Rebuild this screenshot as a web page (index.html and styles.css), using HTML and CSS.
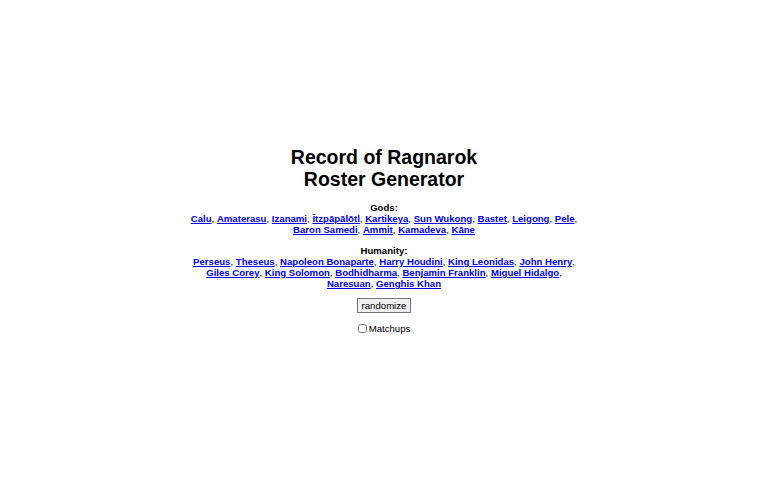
FILE: index.html
```html
<!DOCTYPE html>
<html lang="en">
<head>
    <meta charset="UTF-8">
    <meta name="viewport" content="width=device-width, initial-scale=1.0">
    <title>Record of Ragnarok Roster Generator</title>
    <link rel="stylesheet" href="styles.css">
</head>
<body>
    <div class="page">
        <h1>Record of Ragnarok<br>Roster Generator</h1>

        <div class="roster">
            <div class="side-label">Gods:</div>
            <div class="names">
                <a href="#">Calu</a>, <a href="#">Amaterasu</a>, <a href="#">Izanami</a>, <a href="#">Ītzpāpālōtl</a>, <a href="#">Kartikeya</a>, <a href="#">Sun Wukong</a>, <a href="#">Bastet</a>, <a href="#">Leigong</a>, <a href="#">Pele</a>,
                <a href="#">Baron Samedi</a>, <a href="#">Ammit</a>, <a href="#">Kamadeva</a>, <a href="#">Kāne</a>
            </div>
        </div>

        <div class="roster">
            <div class="side-label">Humanity:</div>
            <div class="names">
                <a href="#">Perseus</a>, <a href="#">Theseus</a>, <a href="#">Napoleon Bonaparte</a>, <a href="#">Harry Houdini</a>, <a href="#">King Leonidas</a>, <a href="#">John Henry</a>,
                <a href="#">Giles Corey</a>, <a href="#">King Solomon</a>, <a href="#">Bodhidharma</a>, <a href="#">Benjamin Franklin</a>, <a href="#">Miguel Hidalgo</a>,
                <a href="#">Naresuan</a>, <a href="#">Genghis Khan</a>
            </div>
        </div>

        <button type="button" class="randomize">randomize</button>

        <label class="matchups"><input type="checkbox" id="matchups"> Matchups</label>
    </div>
</body>
</html>
```

FILE: styles.css
```css
body {
    margin: 0;
    font-family: "Liberation Sans", Arial, sans-serif;
    font-size: 9.6px;
    color: #000;
    background: #fff;
}
.page {
    height: 100vh;
    display: flex;
    flex-direction: column;
    align-items: center;
    justify-content: center;
    gap: 10px;
    text-align: center;
}
h1 {
    font-size: 19.5px;
    line-height: 22px;
    margin: 0 0 2px;
}
.roster {
    width: 392px;
    line-height: 11px;
}
.side-label {
    font-weight: bold;
}
.names a {
    color: #00e;
    font-weight: bold;
}
.randomize {
    font-family: "Liberation Sans", Arial, sans-serif;
    font-size: 9.6px;
    line-height: 11px;
    padding: 1px 4px;
    margin: -1px 0 0;
    background: #efefef;
    border: 1px solid #767676;
    border-radius: 0;
}
.matchups {
    display: flex;
    align-items: center;
    gap: 2px;
    line-height: 11px;
}
.matchups input {
    width: 9px;
    height: 9px;
    margin: 0;
}
```
